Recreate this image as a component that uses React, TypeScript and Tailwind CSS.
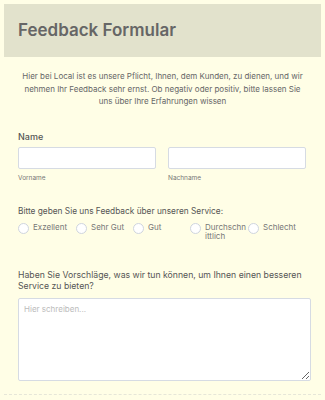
export default function App() {
  const options = ["Exzellent", "Sehr Gut", "Gut", "Durchschnittlich", "Schlecht"];

  return (
    <div
      className="min-h-[400px] w-[325px] bg-[#fffee6] p-1 text-[#555]"
      style={{ fontFamily: "Inter, 'Noto Sans', sans-serif" }}
    >
      <div className="flex h-[53px] items-center bg-[#e2e2cc] px-[14px]">
        <h1 className="text-[17px] font-semibold text-[#666]">
          Feedback Formular
        </h1>
      </div>

      <p className="mx-auto mt-[13px] w-[290px] text-center text-[8px] leading-[12.5px] text-[#666]">
        Hier bei Local ist es unsere Pflicht, Ihnen, dem Kunden, zu dienen, und wir
        nehmen Ihr Feedback sehr ernst. Ob negativ oder positiv, bitte lassen Sie
        uns über Ihre Erfahrungen wissen
      </p>

      <div className="px-[14px]">
        <div className="mt-[22px]">
          <label className="block text-[9px] font-medium text-[#555]">Name</label>
          <div className="mt-[3px] grid grid-cols-2 gap-3 pr-[1px]">
            <div>
              <input className="h-[22px] w-full rounded-[2px] border border-[#d6dbe3] bg-white" />
              <p className="mt-[4px] text-[6.5px] text-[#777]">Vorname</p>
            </div>
            <div>
              <input className="h-[22px] w-full rounded-[2px] border border-[#d6dbe3] bg-white" />
              <p className="mt-[4px] text-[6.5px] text-[#777]">Nachname</p>
            </div>
          </div>
        </div>

        <div className="mt-[21px]">
          <p className="text-[8.3px] text-[#555]">
            Bitte geben Sie uns Feedback über unseren Service:
          </p>
          <div className="mt-[6px] grid grid-cols-[58px_57px_57px_58px_58px]">
            {options.map((opt) => (
              <label key={opt} className="flex items-start gap-[4px]">
                <span className="h-[11px] w-[11px] shrink-0 rounded-full border border-[#cfd5de] bg-white" />
                <span className="w-[42px] break-all text-[8px] leading-[9px] text-[#777]">
                  {opt}
                </span>
              </label>
            ))}
          </div>
        </div>

        <div className="mt-[29px]">
          <p className="text-[8.7px] leading-[11px] text-[#555]">
            Haben Sie Vorschläge, was wir tun können, um Ihnen einen besseren
            Service zu bieten?
          </p>
          <textarea
            placeholder="Hier schreiben..."
            className="mt-[6px] block h-[83px] w-[293px] rounded-[2px] border border-[#d6dbe3] bg-white px-[5px] py-[4px] text-[8px] placeholder:text-[#bbb]"
          />
        </div>
      </div>

      <div className="mt-[13px] border-t border-dashed border-[#e6e6d8]" />
    </div>
  );
}
